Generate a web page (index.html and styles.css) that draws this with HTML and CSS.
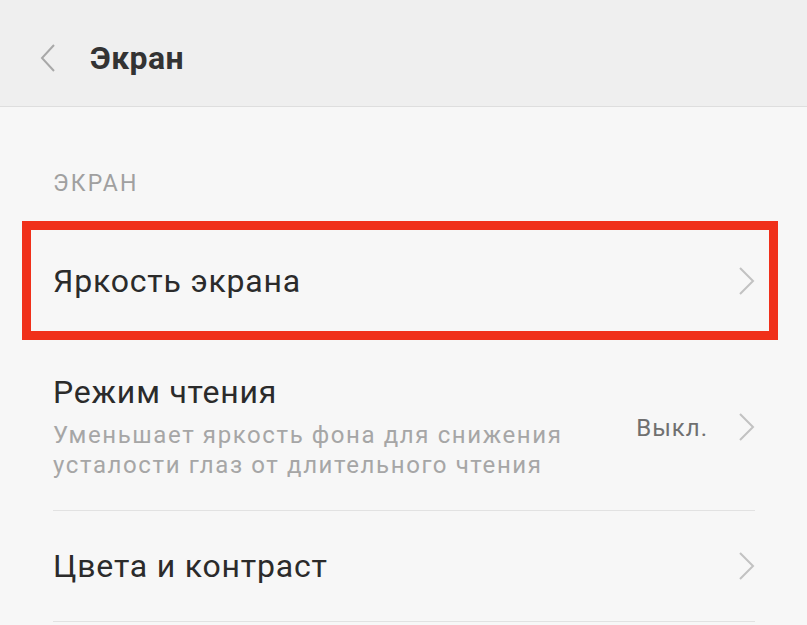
FILE: index.html
```html
<!DOCTYPE html>
<html lang="ru">
<head>
  <meta charset="UTF-8">
  <meta name="viewport" content="width=device-width, initial-scale=1.0">
  <title>Экран</title>
  <link rel="stylesheet" href="styles.css">
</head>
<body>
  <div class="header">
    <svg class="back" width="18" height="30" viewBox="0 0 18 30">
      <polyline points="15,2 3,15 15,28" fill="none" stroke="#a8a8a8" stroke-width="2"/>
    </svg>
    <h1>Экран</h1>
  </div>

  <div class="section-title">ЭКРАН</div>

  <div class="list">
    <div class="row marked">
      <div class="row-body">
        <span class="row-title">Яркость экрана</span>
      </div>
      <svg class="chevron" width="17" height="30" viewBox="0 0 17 30">
        <polyline points="2,2 15,15 2,28" fill="none" stroke="#c2c2c2" stroke-width="2"/>
      </svg>
    </div>

    <div class="row tall">
      <div class="row-body">
        <span class="row-title">Режим чтения</span>
        <span class="row-desc">Уменьшает яркость фона для снижения<br>усталости глаз от длительного чтения</span>
      </div>
      <span class="row-value">Выкл.</span>
      <svg class="chevron" width="17" height="30" viewBox="0 0 17 30">
        <polyline points="2,2 15,15 2,28" fill="none" stroke="#c2c2c2" stroke-width="2"/>
      </svg>
    </div>

    <div class="row">
      <div class="row-body">
        <span class="row-title">Цвета и контраст</span>
      </div>
      <svg class="chevron" width="17" height="30" viewBox="0 0 17 30">
        <polyline points="2,2 15,15 2,28" fill="none" stroke="#c2c2c2" stroke-width="2"/>
      </svg>
    </div>
  </div>
</body>
</html>
```

FILE: styles.css
```css
body {
  margin: 0;
  width: 807px;
  height: 625px;
  overflow: hidden;
  font-family: Roboto, 'Noto Sans', sans-serif;
  background-color: #f7f7f7;
  color: #2b2b2b;
}

.header {
  display: flex;
  align-items: center;
  height: 107px;
  padding: 10px 0 0 39px;
  background-color: #efefef;
  border-bottom: 1px solid #dedede;
  box-sizing: border-box;
}

.header h1 {
  margin: 0 0 0 33px;
  font-size: 32px;
  font-weight: 700;
  letter-spacing: 0.4px;
  color: #333;
}

.section-title {
  padding: 64px 0 0 53px;
  height: 50px;
  font-size: 23px;
  line-height: 26px;
  letter-spacing: 2.2px;
  color: #a0a0a0;
}

.list {
  padding: 0 52px 0 53px;
}

.row {
  display: flex;
  align-items: center;
  height: 111px;
  border-bottom: 1px solid #e2e2e2;
  box-sizing: border-box;
}

.row-body {
  flex: 1;
  display: flex;
  flex-direction: column;
}

.row-title {
  font-size: 32px;
  line-height: 36px;
  letter-spacing: 0.8px;
}

.row-desc {
  margin-top: 10px;
  font-size: 24px;
  line-height: 30px;
  letter-spacing: 1.6px;
  color: #a6a6a6;
}

.row-value {
  margin-right: 30px;
  margin-top: 2px;
  font-size: 24px;
  letter-spacing: 1px;
  color: #707070;
}

.row .chevron {
  flex-shrink: 0;
}

.row.tall {
  height: 171px;
  padding-top: 4px;
}

/* highlighted entry */
.row.marked {
  height: 119px;
  margin: 0 -23px 0 -31px;
  padding: 0 14px 0 22px;
  border: 9px solid #f0301a;
}
```
